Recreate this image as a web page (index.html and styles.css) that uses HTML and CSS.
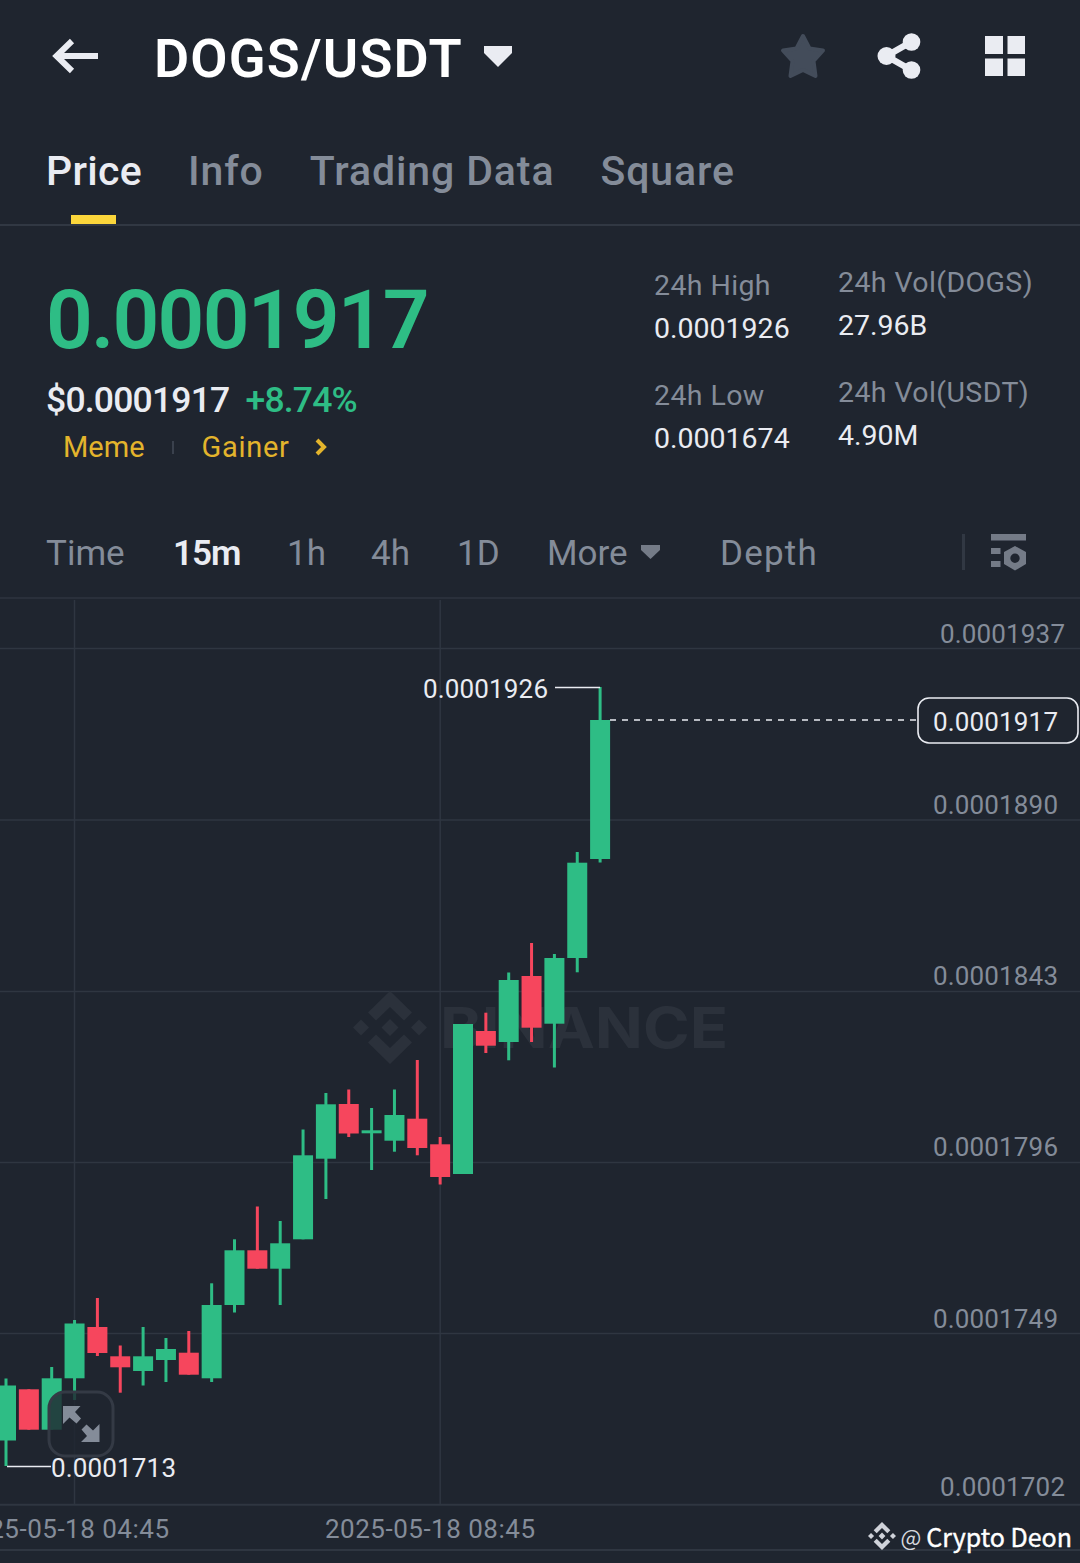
FILE: index.html
```
<!DOCTYPE html>
<html lang="en">
<head>
    <meta charset="UTF-8">
    <meta name="viewport" content="width=device-width, initial-scale=1.0">
    <title>DOGS/USDT</title>
    <link rel="stylesheet" href="styles.css">
</head>
<body>
    <div class="app">
        <!-- Header -->
        <header class="header">
            <svg class="back" width="46" height="36" viewBox="0 0 46 36">
                <path d="M20 3L4.5 18L20 33M4.5 18H46" fill="none" stroke="#eaecf2" stroke-width="6"/>
            </svg>
            <h1>DOGS/USDT</h1>
            <svg class="caret" width="28" height="21" viewBox="0 0 28 21">
                <path d="M0 0H28V7L14 21L0 7Z" fill="#eaecf2"/>
            </svg>
            <div class="header-actions">
                <svg width="46" height="46" viewBox="0 0 46 46">
                    <path d="M23 3L29.500 15.500L43 17.500L33.500 28L35.500 43L23 37L10.500 43L12.500 28L3 17.500L16.500 15.500Z" fill="#434c5a" stroke="#434c5a" stroke-width="4" stroke-linejoin="round"/>
                </svg>
                <svg width="44" height="46" viewBox="0 0 44 46">
                    <path d="M34 9L9.500 23L34 37" fill="none" stroke="#eaecf2" stroke-width="6.500"/>
                    <circle cx="9.500" cy="23" r="9" fill="#eaecf2"/>
                    <circle cx="34.500" cy="9" r="8.800" fill="#eaecf2"/>
                    <circle cx="34.500" cy="37" r="8.800" fill="#eaecf2"/>
                </svg>
                <svg width="40" height="40" viewBox="0 0 40 40">
                    <path d="M0 0H18V18H0ZM22.500 0H40V18H22.500ZM0 22.500H18V40H0ZM22.500 22.500H40V40H22.500Z" fill="#eaecf2"/>
                </svg>
            </div>
        </header>

        <!-- Tabs -->
        <nav class="tabs">
            <a class="tab active">Price</a>
            <a class="tab">Info</a>
            <a class="tab">Trading Data</a>
            <a class="tab">Square</a>
        </nav>

        <!-- Ticker -->
        <section class="ticker">
            <div class="quote">
                <div class="last-price">0.0001917</div>
                <div class="fiat"><span>$0.0001917</span><span class="change">+8.74%</span></div>
                <div class="tags">
                    <span>Meme</span>
                    <i class="tag-sep"></i>
                    <span class="gainer">Gainer</span>
                    <svg class="chevron" width="12" height="18" viewBox="0 0 12 18">
                        <path d="M2 2L9 9L2 16" fill="none" stroke="#e3b42c" stroke-width="4"/>
                    </svg>
                </div>
            </div>
            <div class="stats">
                <div class="label">24h High</div>
                <div class="value">0.0001926</div>
                <div class="label">24h Low</div>
                <div class="value">0.0001674</div>
            </div>
            <div class="stats volume">
                <div class="label">24h Vol(DOGS)</div>
                <div class="value">27.96B</div>
                <div class="label">24h Vol(USDT)</div>
                <div class="value">4.90M</div>
            </div>
        </section>

        <!-- Intervals -->
        <nav class="intervals">
            <span class="time">Time</span>
            <span class="m15 active">15m</span>
            <span class="h1">1h</span>
            <span class="h4">4h</span>
            <span class="d1">1D</span>
            <span class="more">More</span>
            <svg class="more-caret" width="19" height="14" viewBox="0 0 19 14">
                <path d="M0 0H19V5L9.500 14L0 5Z" fill="#747b87"/>
            </svg>
            <span class="depth">Depth</span>
            <i class="interval-sep"></i>
            <svg class="settings" width="36" height="37" viewBox="0 0 36 37">
                <path d="M0 0H35V6.500H0ZM0 14H9.500V20H0ZM0 27H9.500V33H0Z" fill="#747b87"/>
                <path fill-rule="evenodd" d="M24 12L35 18V30L24 36.500L13 30V18ZM24 19.500A4.700 4.700 0 1 0 24 28.900A4.700 4.700 0 1 0 24 19.500Z" fill="#747b87"/>
            </svg>
        </nav>

        <!-- Chart -->
        <svg class="chart" width="1080" height="964" viewBox="0 599 1080 964">
            <g class="grid">
                <path d="M74.500 600V1504M440.200 600V1504"/>
                <path d="M0 648.500H1080M0 820H1080M0 991.500H1080M0 1162.500H1080M0 1333.500H1080"/>
                <path class="axis" d="M0 1504.700H1080M0 1550H1080"/>
            </g>
            <g class="brand">
                <path d="M390 991L412 1012.500L404 1020.500L390 1007L376 1020.500L368 1012.500ZM390 1064L412 1042.500L404 1034.500L390 1048L376 1034.500L368 1042.500ZM390 1019L398.500 1027.500L390 1036L381.500 1027.500ZM361 1019.500L369 1027.500L361 1035.500L353 1027.500ZM419 1019.500L427 1027.500L419 1035.500L411 1027.500Z"/>
                <text x="440" y="1048" textLength="288" lengthAdjust="spacingAndGlyphs">BINANCE</text>
            </g>
            <g id="candles"></g>

            <g class="scale">
                <text x="940" y="643" textLength="125">0.0001937</text>
                <text x="933" y="814" textLength="125">0.0001890</text>
                <text x="933" y="985" textLength="125">0.0001843</text>
                <text x="933" y="1156" textLength="125">0.0001796</text>
                <text x="933" y="1328" textLength="125">0.0001749</text>
                <text x="940" y="1496" textLength="125">0.0001702</text>
                <text x="-41" y="1538" textLength="210">2025-05-18 04:45</text>
                <text x="325" y="1538" textLength="210">2025-05-18 08:45</text>
            </g>

            <g class="marks">
                <path d="M555 687.500H600M7 1466.500H51"/>
                <path d="M610 720H918" stroke-dasharray="6 6"/>
                <rect x="918" y="698" width="160" height="45" rx="11"/>
                <text x="423" y="698" textLength="125">0.0001926</text>
                <text x="933" y="731" textLength="125">0.0001917</text>
                <text x="51" y="1477" textLength="125">0.0001713</text>
            </g>

            <g class="expand">
                <rect x="49" y="1392" width="64" height="64" rx="16"/>
                <path d="M63 1406H80.500L75 1412L81 1418.500L76.500 1423.500L69.500 1417.500L63 1424ZM99.500 1442H81L87 1436L81.500 1429.500L86.500 1424.500L93 1430.500L99.500 1424Z"/>
            </g>
        </svg>

        <div class="author">
            <svg width="28" height="28" viewBox="0 0 74 74">
                <path d="M37 0L59 22L51 30L37 16L23 30L15 22ZM37 74L59 52L51 44L37 58L23 44L15 52ZM37 28L46 37L37 46L28 37ZM8 29L16 37L8 45L0 37ZM66 29L74 37L66 45L58 37Z" fill="#cfd2d9"/>
            </svg>
            <span class="at">@</span>
            <span class="name">Crypto Deon</span>
        </div>
    </div>

    <script>
    // high, body top, body bottom, low, direction
    const candles = [
        [1378.5, 1385.5, 1440.5, 1466, 'up'],
        [1389.3, 1389.3, 1429.7, 1429.7, 'down'],
        [1367, 1378.3, 1429.7, 1429.7, 'up'],
        [1320, 1323.5, 1378.3, 1400, 'up'],
        [1298, 1327, 1353, 1356, 'down'],
        [1345.5, 1356.3, 1367.3, 1392.7, 'down'],
        [1327, 1356.3, 1371, 1385.5, 'up'],
        [1338, 1349, 1360, 1382, 'up'],
        [1331, 1352.7, 1374.7, 1374.7, 'down'],
        [1283.3, 1305, 1378.3, 1382, 'up'],
        [1239.3, 1250.3, 1305, 1312.5, 'up'],
        [1206.5, 1250.3, 1268.7, 1268.7, 'down'],
        [1221, 1243.3, 1268.7, 1305, 'up'],
        [1129.5, 1155.3, 1239.3, 1239.3, 'up'],
        [1093, 1104.3, 1158.7, 1199, 'up'],
        [1089.5, 1104, 1133.5, 1137, 'down'],
        [1108, 1130.3, 1133.3, 1170, 'up'],
        [1089.5, 1115, 1140.7, 1151.7, 'up'],
        [1060, 1118.7, 1148, 1155.3, 'down'],
        [1137, 1144.3, 1177, 1184.5, 'down'],
        [1024, 1024, 1174, 1174, 'up'],
        [1012.7, 1031, 1045.7, 1053, 'down'],
        [972.5, 980, 1042, 1060.3, 'up'],
        [943, 976, 1027.7, 1042, 'down'],
        [954, 958, 1023.7, 1067.5, 'up'],
        [852, 862.7, 958, 972.3, 'up'],
        [687, 720, 859, 862.5, 'up']
    ];
    const step = 22.85;
    const startX = 6;

    document.getElementById('candles').innerHTML = candles.map(([high, top, bottom, low, dir], i) => {
        const x = startX + i * step;
        return `<g class="${dir}">
            <rect class="wick" x="${x - 1.5}" y="${high}" width="3" height="${low - high}"/>
            <rect x="${x - 10}" y="${top}" width="20" height="${bottom - top}"/>
        </g>`;
    }).join('');
    </script>
</body>
</html>
```
FILE: styles.css
```
body {
    margin: 0;
    background-color: #1f252f;
    color: #eaecf2;
    font-family: Roboto, "Liberation Sans", sans-serif;
}

.app {
    position: relative;
    width: 1080px;
    height: 1563px;
    overflow: hidden;
}

svg {
    display: block;
    flex-shrink: 0;
}

/* header */
.header {
    display: flex;
    align-items: center;
    height: 112px;
    padding: 0 55px 0 52px;
}

.header h1 {
    margin: 0 0 0 56px;
    padding-top: 6px;
    width: 310px;
    font-size: 54px;
    font-weight: 600;
    line-height: 60px;
    letter-spacing: 1.2px;
    color: #fff;
    white-space: nowrap;
}

.caret {
    margin-left: 20px;
}

.header-actions {
    display: flex;
    align-items: center;
    margin-left: auto;
}

.header-actions svg + svg {
    margin-left: 51px;
}

.header-actions svg + svg + svg {
    margin-left: 64px;
}

/* tabs */
.tabs {
    display: flex;
    gap: 46px;
    height: 68px;
    padding: 44px 46px 0;
    border-bottom: 2px solid #313843;
    line-height: 30px;
}

.tab {
    position: relative;
    font-size: 41px;
    font-weight: 500;
    letter-spacing: 0.9px;
    color: #848c99;
    white-space: nowrap;
}

.tab.active {
    letter-spacing: 0.3px;
    color: #eaecf2;
}

.tab.active::after {
    content: '';
    position: absolute;
    left: 25px;
    bottom: 0;
    width: 45px;
    height: 9px;
    background-color: #fbd63b;
}

/* ticker */
.ticker {
    display: flex;
    height: 284px;
}

.quote {
    width: 608px;
    padding: 54px 0 0 46px;
}

.last-price {
    font-size: 82px;
    font-weight: 600;
    line-height: 80px;
    letter-spacing: -1.8px;
    color: #2ebd85;
}

.fiat {
    display: flex;
    gap: 16px;
    margin-top: 20px;
    font-size: 35.5px;
    font-weight: 500;
    line-height: 40px;
    letter-spacing: -0.8px;
}

.change {
    color: #2ebd85;
}

.tags {
    display: flex;
    align-items: center;
    padding-left: 17px;
    margin-top: 6px;
    font-size: 29px;
    line-height: 42px;
    color: #e3b42c;
}

.tag-sep {
    width: 2px;
    height: 13px;
    margin: 0 28px 0 27px;
    background-color: #3a414d;
}

.gainer {
    letter-spacing: 0.7px;
}

.chevron {
    margin-left: 25px;
}

.stats {
    width: 184px;
    padding-top: 38px;
    font-size: 28.5px;
    line-height: 43px;
    white-space: nowrap;
}

.stats.volume {
    padding-top: 35px;
}

.stats .label {
    letter-spacing: 0.4px;
    color: #848c99;
}

.stats .value {
    margin-bottom: 24px;
}

/* intervals */
.intervals {
    display: flex;
    align-items: center;
    height: 87px;
    padding: 0 53px 0 46px;
    border-bottom: 2px solid #2a303b;
    font-size: 35px;
    color: #848c99;
}

.intervals .active {
    font-weight: 600;
    letter-spacing: -1px;
    color: #eaecf2;
}

.intervals .time {
    width: 127px;
}

.intervals .m15 {
    width: 114px;
}

.intervals .h1 {
    width: 84px;
}

.intervals .h4 {
    width: 86px;
}

.intervals .d1 {
    width: 90px;
}

.more {
    width: 94px;
}

.more-caret {
    margin: 0 60px 4px 0;
}

.depth {
    letter-spacing: 1.2px;
}

.interval-sep {
    width: 3px;
    height: 36px;
    margin: 0 26px 3px auto;
    background-color: #313843;
}

.settings {
    margin-bottom: 2px;
}

/* chart */
.chart {
    font-size: 26px;
}

.grid path {
    fill: none;
    stroke: #2f3641;
    stroke-width: 1.5;
}

.grid .axis {
    stroke-width: 2;
}

.brand {
    fill: #2b313b;
    font-family: Inter, sans-serif;
    font-size: 56px;
    font-weight: 700;
}

.up {
    fill: #2ebd85;
}

.down {
    fill: #f6465d;
}

.scale {
    fill: #848c99;
}

.marks path,
.marks rect {
    fill: none;
    stroke: #eaecf2;
    stroke-width: 1.6;
}

.marks rect {
    fill: #1f252f;
}

.marks text {
    fill: #eaecf2;
}

.expand rect {
    fill: #1f252f;
    fill-opacity: 0.8;
    stroke: #343a45;
    stroke-width: 3;
}

.expand path {
    fill: #848c99;
}

/* author mark laid over the chart corner */
.author {
    position: absolute;
    right: 8px;
    bottom: 8px;
    display: flex;
    align-items: center;
    font-family: "Noto Sans CJK SC", sans-serif;
    font-size: 25px;
    font-weight: 400;
    line-height: 38px;
    color: #fff;
}

.author .name {
    -webkit-text-stroke: 0.4px #fff;
}

.author .at {
    margin: 0 5px;
    font-size: 22px;
    color: #d5d8de;
}
```
